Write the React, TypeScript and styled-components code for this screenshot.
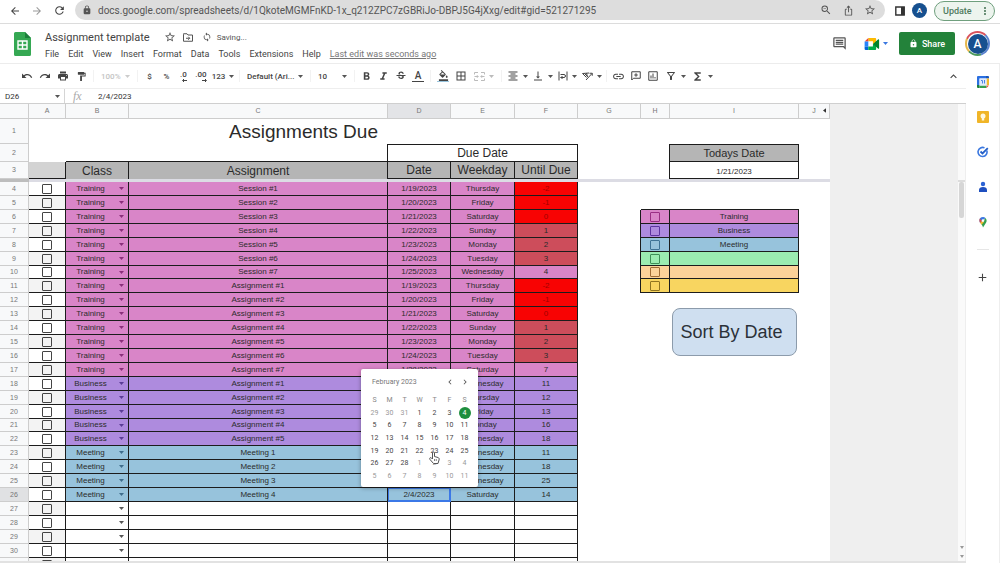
import React from "react";
import styled, { createGlobalStyle, css } from "styled-components";
import {
  MdUndo, MdRedo, MdPrint, MdFormatPaint, MdFormatBold, MdFormatItalic, MdStrikethroughS,
  MdFormatColorFill, MdBorderAll, MdFormatAlignCenter, MdVerticalAlignBottom,
  MdLink, MdFunctions, MdKeyboardArrowUp, MdStarBorder, MdSync,
  MdOutlineInsertComment, MdArrowBack, MdArrowForward, MdRefresh, MdLock, MdZoomOut, MdIosShare,
  MdMoreVert, MdAdd, MdChevronLeft, MdChevronRight, MdOutlineFilterAlt,
} from "react-icons/md";

const ui = `Roboto, "Liberation Sans", sans-serif`;
const arial = `"Liberation Sans", Arial, sans-serif`;

const GlobalStyle = createGlobalStyle`
  *, *::before, *::after { box-sizing: border-box; }
  body { margin: 0; background: #fff; font-family: ${ui}; color: #444; overflow: hidden; }
  button, input, select { font: inherit; color: inherit; margin: 0; padding: 0; border: 0; background: none; }
  button { cursor: pointer; }
  svg { display: block; flex: none; }
`;

const Page = styled.div`
  display: flex;
  flex-direction: column;
  height: 100vh;
`;

/* Browser bar */
const BrowserBar = styled.div`
  display: flex;
  align-items: flex-start;
  height: 24px;
  flex: none;
  border-bottom: 1px solid #dcdcdc;
`;
const NavButtons = styled.div`
  display: flex;
  align-items: center;
  height: 21px;
  padding-left: 4px;
  width: 75px;
`;
const NavButton = styled.button<{ $dim?: boolean }>`
  display: flex;
  justify-content: center;
  width: 22px;
  color: ${(p) => (p.$dim ? "#999" : "#444")};
`;
const Address = styled.div`
  display: flex;
  align-items: center;
  flex: 1;
  min-width: 0;
  height: 20px;
  padding: 0 4px 0 7px;
  background: #dddddd;
  border-radius: 10px;
  color: #555;
`;
const AddressInput = styled.input`
  flex: 1;
  min-width: 0;
  height: 20px;
  padding-left: 6px;
  font: 10px ${ui};
  color: #555;
`;
const AddressButton = styled.button`
  display: flex;
  justify-content: center;
  width: 22px;
  color: #555;
`;
const BrowserActions = styled.div`
  display: flex;
  align-items: center;
  height: 21px;
  padding: 0 5px 0 10px;
  gap: 7px;
`;
const Avatar = styled.button<{ $size: number }>`
  width: ${(p) => p.$size}px;
  height: ${(p) => p.$size}px;
  border-radius: 50%;
  background: #17508f;
  color: #fff;
  font: 500 ${(p) => (p.$size > 16 ? 12 : 8)}px/1 ${ui};
`;
const UpdateButton = styled.button`
  display: flex;
  align-items: center;
  justify-content: space-between;
  width: 61px;
  height: 20px;
  padding: 0 3px 0 8px;
  border: 1px solid #6f9f7d;
  border-radius: 10px;
  background: #edf4ee;
  color: #4f7a5d;
  font-size: 9px;
  font-weight: 500;
`;

/* Document header */
const DocHeader = styled.header`
  display: flex;
  align-items: center;
  height: 40px;
  flex: none;
  padding: 0 10px 0 14px;
  border-bottom: 1px solid #ececec;
`;
const DocInfo = styled.div`
  display: flex;
  flex-direction: column;
  flex: 1;
  gap: 2px;
  padding: 3px 0 0 14px;
`;
const TitleRow = styled.div`
  display: flex;
  align-items: center;
  height: 15px;
`;
const Title = styled.h1`
  margin: 0 14px 0 0;
  font: 400 11px/15px ${ui};
  color: #444;
`;
const TitleIcon = styled.button`
  display: flex;
  width: 19px;
  color: #555;
`;
const Saving = styled.span`
  font-size: 8px;
  color: #555;
  margin-left: -4px;
`;
const MenuRow = styled.nav`
  display: flex;
  align-items: center;
  gap: 9px;
  height: 14px;
  font-size: 9px;
`;
const MenuButton = styled.button`
  color: #444;
  white-space: nowrap;
`;
const LastEdit = styled.a`
  color: #777;
  text-decoration: underline;
`;
const HeaderActions = styled.div`
  display: flex;
  align-items: center;
  gap: 10px;
`;
const IconButton = styled.button`
  display: flex;
  align-items: center;
  justify-content: center;
  color: #555;
`;
const MeetButton = styled(IconButton)`
  width: 32px;
  gap: 3px;
  padding-left: 5px;
`;
const ShareButton = styled.button`
  display: flex;
  align-items: center;
  justify-content: center;
  gap: 4px;
  width: 56px;
  height: 23px;
  border-radius: 2px;
  background: #23823a;
  color: #fff;
  font-size: 9px;
  font-weight: 500;
`;
const AvatarRing = styled.div`
  display: flex;
  align-items: center;
  justify-content: center;
  width: 25px;
  height: 25px;
  border-radius: 50%;
  background:
    radial-gradient(circle, #fff 0 10px, transparent 11px),
    conic-gradient(#d9535c 0 12%, #5b83cf 12% 45%, #4c9a5e 45% 63%, #e6b74b 63% 82%, #d9535c 82%);
`;

/* Body: editor beside the app panel */
const Workspace = styled.div`
  display: flex;
  flex: 1;
  min-height: 0;
`;
const Editor = styled.main`
  display: flex;
  flex-direction: column;
  flex: 1;
  min-width: 0;
`;
const Toolbar = styled.div`
  display: flex;
  align-items: center;
  height: 25px;
  flex: none;
  padding: 0 4px 0 18px;
  border-bottom: 1px solid #eee;
  color: #444;
  font-size: 8px;
`;
const Tool = styled.button<{ $w?: number; $dim?: boolean }>`
  display: flex;
  align-items: center;
  justify-content: center;
  gap: 4px;
  width: ${(p) => p.$w ?? 18}px;
  height: 20px;
  flex: none;
  color: ${(p) => (p.$dim ? "#bbb" : "#444")};
  font-weight: 500;
`;
const Decimal = styled.span`
  display: flex;
  flex-direction: column;
  line-height: 8px;
  svg { align-self: flex-end; }
`;
const Divider = styled.span`
  width: 1px;
  height: 12px;
  margin: 0 3px;
  flex: none;
  background: #f2f2f2;
`;
const Swatched = styled.span<{ $bar: string }>`
  display: flex;
  justify-content: center;
  width: 12px;
  border-bottom: 1px solid ${(p) => p.$bar};
  font-size: 10px;
  line-height: 11px;
`;
const Picker = styled.label<{ $w: number; $dim?: boolean }>`
  display: flex;
  align-items: center;
  width: ${(p) => p.$w}px;
  padding: 0 4px;
  flex: none;
  color: ${(p) => (p.$dim ? "#c4c4c4" : "#444")};
  font-weight: 500;
  select { flex: 1; min-width: 0; appearance: none; outline: 0; opacity: 1; color: inherit; }
  svg { pointer-events: none; }
`;
const Spacer = styled.span`
  flex: 1;
`;

const FormulaBar = styled.div`
  display: flex;
  align-items: center;
  height: 15px;
  flex: none;
  border-bottom: 1px solid #cfcfcf;
  font-size: 8px;
  color: #333;
`;
const NameBox = styled.label`
  display: flex;
  align-items: center;
  width: 65px;
  height: 14px;
  padding: 0 4px 0 5px;
  border-right: 1px solid #d5d5d5;
  input { flex: 1; min-width: 0; font: 8px ${ui}; }
`;
const Fx = styled.span`
  width: 33px;
  padding-left: 8px;
  font: italic 12px/14px "Liberation Serif", serif;
  color: #aaa;
`;
const FormulaInput = styled.input`
  flex: 1;
  font: 8px ${ui};
`;

/* Sheet */
const SheetArea = styled.div`
  display: flex;
  flex: 1;
  min-height: 0;
  border-bottom: 2px solid #e2e2e2;
`;
const SheetView = styled.div`
  position: relative;
  flex: 1;
  min-width: 0;
  overflow: hidden;
  background: #efefef;
`;
const Grid = styled.table`
  table-layout: fixed;
  width: 830px;
  border-spacing: 0;
  background: #fff;
  font-family: ${arial};
  font-size: 8px;
  line-height: 12px;
  color: #2b2b2b;
`;
const Row = styled.tr<{ $h: number }>`
  height: ${(p) => p.$h}px;
`;
/* Every eleventh row is rounded down, as the zoomed-out grid does. */
const Body = styled.tbody`
  tr { height: 14px; }
  tr:nth-child(11n - 4) { height: 13px; }
`;
const head = css`
  padding: 0;
  background: #f8f9fa;
  border: 0 solid #cdcdcd;
  border-width: 0 1px 1px 0;
  color: #777;
  font-weight: 400;
  font-size: 7px;
  text-align: center;
`;
const ColHead = styled.th<{ $active?: boolean }>`
  ${head}
  position: relative;
  ${(p) => p.$active && "background: #e3e4e7;"}
  svg { position: absolute; right: 3px; top: 4px; }
`;
const RowHead = styled.th<{ $active?: boolean }>`
  ${head}
  ${(p) => p.$active && "background: #e0e1e3;"}
`;
type CellProps = {
  $bg?: string; $t?: boolean; $r?: boolean; $b?: boolean; $ink?: string; $size?: number; $selected?: boolean; $low?: boolean;
};
const Cell = styled.td<CellProps>`
  padding: 0;
  text-align: center;
  vertical-align: ${(p) => (p.$low ? "bottom" : "middle")};
  white-space: nowrap;
  background: ${(p) => p.$bg ?? "transparent"};
  color: ${(p) => p.$ink ?? "inherit"};
  border: 0 solid #1c1c1c;
  border-top-width: ${(p) => (p.$t ? 1 : 0)}px;
  border-right-width: ${(p) => (p.$r ? 1 : 0)}px;
  border-bottom-width: ${(p) => (p.$b ? 1 : 0)}px;
  ${(p) => p.$size && `font-size: ${p.$size}px; line-height: ${p.$size}px;`}
  ${(p) => p.$selected && "box-shadow: inset 0 0 0 1px #3b78e7; border-color: #3b78e7;"}
`;
const Freeze = styled.td<{ $dark?: boolean }>`
  padding: 0;
  background: ${(p) => (p.$dark ? "#bdbdbd" : "#dcdce4")};
`;
const Tick = styled.input<{ $ink?: string }>`
  display: block;
  appearance: none;
  width: 10px;
  height: 10px;
  margin: 0 auto;
  border: 1px solid ${(p) => p.$ink ?? "#444"};
  border-radius: 1px;
`;
const ClassPick = styled.div`
  display: flex;
  align-items: center;
  height: 12px;
  select {
    width: 49px;
    height: 12px;
    appearance: none;
    text-align: center;
    text-align-last: center;
    line-height: 12px;
  }
  svg { margin-left: 4px; pointer-events: none; }
`;
const SortButton = styled.button`
  position: absolute;
  left: 672px;
  top: 204px;
  width: 125px;
  height: 48px;
  padding-right: 6px;
  border: 1px solid #8c9bab;
  border-radius: 8px;
  background: #cfdff0;
  color: #2b3138;
  font: 18px ${arial};
`;

/* Date picker */
const Popup = styled.div`
  position: absolute;
  left: 361px;
  top: 265px;
  width: 117px;
  padding: 5px 6px;
  border-radius: 2px;
  background: #fff;
  box-shadow: 0 1px 4px rgba(0, 0, 0, 0.35);
  color: #555;
  font-size: 7px;
`;
const Month = styled.div`
  display: flex;
  align-items: center;
  height: 15px;
  padding: 0 0 0 5px;
  span { flex: 1; font-size: 7px; color: #777; }
  button { width: 15px; display: flex; justify-content: center; }
`;
const Days = styled.div`
  display: grid;
  grid-template-columns: repeat(7, 1fr);
  grid-template-rows: repeat(7, 1fr);
  height: 88px;
  margin-top: 5px;
  place-items: center;
`;
const DayName = styled.span`
  color: #888;
`;
const Day = styled.button<{ $muted?: boolean; $on?: boolean }>`
  width: 12px;
  height: 12px;
  border-radius: 50%;
  line-height: 12px;
  color: ${(p) => (p.$on ? "#fff" : p.$muted ? "#999" : "#444")};
  background: ${(p) => (p.$on ? "#1e8e3e" : "transparent")};
`;
const Pointer = styled.svg`
  position: absolute;
  left: 68px;
  top: 82px;
`;

/* Scroll track */
const Track = styled.div`
  display: flex;
  flex-direction: column;
  align-items: center;
  width: 8px;
  flex: none;
  background: #fafafa;
  border-right: 1px solid #eee;
`;
const TrackHead = styled.div`
  width: 100%;
  height: 78px;
  border-bottom: 2px solid #dcdcdc;
`;
const Thumb = styled.div`
  width: 5px;
  height: 36px;
  border-radius: 2px;
  background: #d6d6d6;
`;
const Arrows = styled.div`
  display: flex;
  flex-direction: column;
  gap: 6px;
  margin-top: auto;
  padding-bottom: 3px;
`;

/* App panel */
const AppPanel = styled.aside`
  display: flex;
  flex-direction: column;
  align-items: center;
  width: 34px;
  flex: none;
  border-right: 1px solid #eee;
`;
const AppButton = styled.button`
  display: flex;
  align-items: center;
  justify-content: center;
  width: 33px;
  height: 35px;
  color: #444;
`;
const AppRule = styled.hr`
  width: 12px;
  margin: 10px 0;
  border: 0;
  border-top: 1px solid #e6e6e6;
`;

const Caret = ({ color = "#555", size = 5 }: { color?: string; size?: number }) => (
  <svg width={size} height="3" viewBox="0 0 6 3" preserveAspectRatio="none"><path d="M0 0h6L3 3z" fill={color} /></svg>
);

const PINK = "#d985c8", PURPLE = "#ae8bde", BLUE = "#97c3dc";
const GREEN = "#9becb1", ORANGE = "#fcd299", YELLOW = "#f8d560";
const GRAY = "#b5b5b5", RED = "#f80303", ROSE = "#cd4d5b";
const classes: Record<string, string> = { Training: PINK, Business: PURPLE, Meeting: BLUE };
const caretInk: Record<string, string> = { Training: "#8a2f7a", Business: "#5b3c96", Meeting: "#3f6d8c" };

type Entry = [string, string, string, string, string];
const entries: Entry[] = [
  ["Training", "Session #1", "1/19/2023", "Thursday", "-2"],
  ["Training", "Session #2", "1/20/2023", "Friday", "-1"],
  ["Training", "Session #3", "1/21/2023", "Saturday", "0"],
  ["Training", "Session #4", "1/22/2023", "Sunday", "1"],
  ["Training", "Session #5", "1/23/2023", "Monday", "2"],
  ["Training", "Session #6", "1/24/2023", "Tuesday", "3"],
  ["Training", "Session #7", "1/25/2023", "Wednesday", "4"],
  ["Training", "Assignment #1", "1/19/2023", "Thursday", "-2"],
  ["Training", "Assignment #2", "1/20/2023", "Friday", "-1"],
  ["Training", "Assignment #3", "1/21/2023", "Saturday", "0"],
  ["Training", "Assignment #4", "1/22/2023", "Sunday", "1"],
  ["Training", "Assignment #5", "1/23/2023", "Monday", "2"],
  ["Training", "Assignment #6", "1/24/2023", "Tuesday", "3"],
  ["Training", "Assignment #7", "1/28/2023", "Saturday", "7"],
  ["Business", "Assignment #1", "2/1/2023", "Wednesday", "11"],
  ["Business", "Assignment #2", "2/2/2023", "Thursday", "12"],
  ["Business", "Assignment #3", "2/3/2023", "Friday", "13"],
  ["Business", "Assignment #4", "2/6/2023", "Monday", "16"],
  ["Business", "Assignment #5", "2/8/2023", "Wednesday", "18"],
  ["Meeting", "Meeting 1", "2/1/2023", "Wednesday", "11"],
  ["Meeting", "Meeting 2", "2/8/2023", "Wednesday", "18"],
  ["Meeting", "Meeting 3", "2/15/2023", "Wednesday", "25"],
  ["Meeting", "Meeting 4", "2/4/2023", "Saturday", "14"],
  ...Array.from({ length: 5 }, (): Entry => ["", "", "", "", ""]),
];

const legend: Record<number, [string, string, string]> = {
  6: [PINK, "Training", "#9a2f85"],
  7: [PURPLE, "Business", "#5d35a0"],
  8: [BLUE, "Meeting", "#3f7396"],
  9: [GREEN, "", "#3f8f58"],
  10: [ORANGE, "", "#a06c35"],
  11: [YELLOW, "", "#8f7420"],
};

const widths = [29, 37, 63, 259, 63, 64, 63, 63, 29, 129, 31];

const EntryRow = ({ entry, n }: { entry: Entry; n: number }) => {
  const [kind, name, date, day, left] = entry;
  const bg = classes[kind];
  const due = left === "" ? NaN : Number(left);
  const dueBg = due <= 0 ? RED : due <= 3 ? ROSE : bg;
  const key = legend[n];
  return (
    <tr>
      <RowHead scope="row" $active={n === 26}>{n}</RowHead>
      <Cell $r $b $bg={n % 2 ? "#f3f3f3" : "#fff"}><Tick type="checkbox" aria-label={`Row ${n} done`} /></Cell>
      <Cell $r $b $bg={bg}>
        <ClassPick>
          <select aria-label={`Row ${n} class`} defaultValue={kind}>
            <option></option><option>Training</option><option>Business</option><option>Meeting</option>
          </select>
          <Caret color={caretInk[kind]} />
        </ClassPick>
      </Cell>
      <Cell $r $b $bg={bg}>{name}</Cell>
      <Cell $r $b $bg={bg} $selected={n === 26}>{date}</Cell>
      <Cell $r $b $bg={bg}>{day}</Cell>
      <Cell $r $b $bg={dueBg} $ink={due <= 0 ? "#a00000" : undefined}>{left}</Cell>
      <Cell $r={!!key} />
      <Cell $r={!!key} $b={!!key || n === 5} $bg={key?.[0]}>
        {key && <Tick type="checkbox" aria-label={`Legend ${n - 5}`} $ink={key[2]} />}
      </Cell>
      <Cell $r={!!key} $b={!!key || n === 5} $bg={key?.[0]}>{key?.[1]}</Cell>
      <Cell />
    </tr>
  );
};

const monthDays = [29, 30, 31, ...Array.from({ length: 28 }, (_, i) => i + 1), ...Array.from({ length: 11 }, (_, i) => i + 1)];

const DatePicker = () => (
  <Popup role="dialog" aria-label="Choose date">
    <Month>
      <span>February 2023</span>
      <button aria-label="Previous month"><MdChevronLeft size={10} /></button>
      <button aria-label="Next month"><MdChevronRight size={10} /></button>
    </Month>
    <Days>
      {["S", "M", "T", "W", "T", "F", "S"].map((d, i) => <DayName key={i}>{d}</DayName>)}
      {monthDays.map((d, i) => <Day key={i} $muted={i < 3 || i > 30} $on={i === 6}>{d}</Day>)}
    </Days>
    <Pointer width="11" height="14" viewBox="0 0 22 28">
      <path d="M7 16V4c0-3 4-3 4 0v7l7 2c2 1 3 2 2 5l-2 7H9l-7-8c-2-3 1-5 3-3z" fill="#fff" stroke="#555" strokeWidth="2" strokeLinejoin="round" />
      <path d="M11 16v4M14.500 16v4" stroke="#555" strokeWidth="1.500" />
    </Pointer>
  </Popup>
);

const SheetsLogo = () => (
  <svg width="17" height="24" viewBox="0 0 17 24">
    <path d="M1.500 0H11l6 6v16.500a1.500 1.500 0 0 1-1.500 1.500h-14A1.500 1.500 0 0 1 0 22.500v-21A1.500 1.500 0 0 1 1.500 0z" fill="#35a853" />
    <path d="M11 0l6 6h-6z" fill="#1d7f3c" />
    <path d="M4 9h9v8H4zM4 13h9M8.500 9v8" fill="none" stroke="#fff" strokeWidth="1.400" />
  </svg>
);
const MeetLogo = () => (
  <svg width="16" height="12" viewBox="0 0 16 13">
    <path d="M4 0h7v3.500H4z" fill="#fbbc04" />
    <path d="M4 0v3.800H0z" fill="#ea4335" />
    <path d="M0 3.800h4v5.400H0z" fill="#2684fc" />
    <path d="M0 9.200h4V13H1.200A1.200 1.200 0 0 1 0 11.800z" fill="#0066da" />
    <path d="M4 9.200h5V7l3.500-3V12a1 1 0 0 1-1 1H4z" fill="#00ac47" />
    <path d="M9 3.500V0h2.500a1 1 0 0 1 1 1v3L9 6.800z" fill="#ffba00" />
    <path d="M9 6.500l5.500-5c.5-.4 1.200 0 1.200.5v9c0 .6-.7 1-1.200.5z" fill="#00832d" />
  </svg>
);
const FolderMove = () => (
  <svg width="10" height="9" viewBox="0 0 20 18" fill="none" stroke="#555" strokeWidth="2">
    <path d="M1 3.500V16.500h18V4H10L8 1.500H1z" /><path d="M6 10.500h7M10.500 7.500l3 3-3 3" />
  </svg>
);
const SidePanelIcon = () => (
  <svg width="10" height="10" viewBox="0 0 10 10"><path d="M.8 1h8.400v8H.8z" fill="none" stroke="#333" strokeWidth="1.400" /><path d="M6 1h3.500v8H6z" fill="#333" /></svg>
);
const MergeIcon = () => (
  <svg width="11" height="9" viewBox="0 0 22 18" fill="none" stroke="#bbb" strokeWidth="2">
    <path d="M1 5V1h7M14 1h7v4M1 13v4h7M14 17h7v-4M1 9h7M14 9h7M6 6.500L8.500 9 6 11.500M16 6.500L13.500 9 16 11.500" />
  </svg>
);
const WrapIcon = () => (
  <svg width="10" height="10" viewBox="0 0 20 20" fill="none" stroke="#444" strokeWidth="2">
    <path d="M2 1v18M18 1v18M5 13h7c4 0 4-6 0-6H5M9 10l-3 3 3 3" />
  </svg>
);
const RotateIcon = () => (
  <svg width="11" height="10" viewBox="0 0 22 20" fill="none" stroke="#444" strokeWidth="2">
    <path d="M1 5l13-1M1 5l8 8M5 5l6 6M9 4l2 8M8 18L20 5M15 4.500l5.500 0v5" />
  </svg>
);
const AddCommentIcon = () => (
  <svg width="10" height="10" viewBox="0 0 20 20" fill="none" stroke="#444" strokeWidth="2">
    <path d="M1.500 18V1.500h17v13H5zM10 4.500v7M6.500 8h7" />
  </svg>
);
const ChartIcon = () => (
  <svg width="10" height="10" viewBox="0 0 20 20" fill="none" stroke="#444" strokeWidth="2">
    <path d="M1.500 1.500h17v17h-17zM6 9v6M10 5v10M14 12v3" />
  </svg>
);
const CalendarLogo = () => (
  <svg width="12" height="12" viewBox="0 0 12 12">
    <path d="M0 1a1 1 0 0 1 1-1h8v2.500H2.500V9H0z" fill="#2b6fe0" />
    <path d="M9 0h2a1 1 0 0 1 1 1v1.500H9z" fill="#1a56b8" /><path d="M9.500 2.500H12V9H9.500z" fill="#f2b92e" />
    <path d="M2.500 9.500h7V12h-7z" fill="#35a04f" /><path d="M0 9h2.500v3H1a1 1 0 0 1-1-1z" fill="#1d7f3c" />
    <path d="M9.500 9.500H12L9.500 12z" fill="#e34c3c" /><path d="M2.500 2.500h7v7h-7z" fill="#dfe9fb" />
    <path d="M4 4.500h1.500v3M7.500 4v3.500" stroke="#4b85e5" fill="none" />
  </svg>
);
const KeepLogo = () => (
  <svg width="12" height="12" viewBox="0 0 12 12">
    <rect width="12" height="12" rx="1" fill="#f0b528" />
    <circle cx="6" cy="5" r="2.500" fill="#fff8e0" /><path d="M4.800 7h2.400v2.500H4.800z" fill="#fff8e0" />
  </svg>
);
const TasksLogo = () => (
  <svg width="12" height="12" viewBox="0 0 12 12" fill="none">
    <path d="M9.800 4.500A4.500 4.500 0 1 1 7.500 1.900" stroke="#3b78e0" strokeWidth="1.600" />
    <path d="M3.500 5.500l2 2 5.300-5.300" stroke="#2460c8" strokeWidth="1.800" />
  </svg>
);
const ContactsLogo = () => (
  <svg width="10" height="12" viewBox="0 0 10 12">
    <circle cx="5" cy="3" r="2.200" fill="#2b62d4" /><path d="M1 11V9c0-2 1.500-3 4-3s4 1 4 3v2z" fill="#1f4fbf" />
  </svg>
);
const MapsLogo = () => (
  <svg width="10" height="12" viewBox="0 0 10 12">
    <path d="M5 1a3.600 3.600 0 0 0-3.600 3.600c0 1 .3 1.700.8 2.400L7.500 2C6.800 1.300 6 1 5 1z" fill="#3b78e0" />
    <path d="M1.900 2.600C1.200 3.900 1.300 5.800 2.200 7L4 5z" fill="#e34c3c" />
    <path d="M7.400 1.900c1.600 1.400 1.500 3.500.6 4.900L5 11.500C4.700 10 4.200 9.300 3.400 8.300z" fill="#35a04f" />
    <path d="M2.200 7l2-2.200L6 6 3.500 8.700z" fill="#f2b92e" />
    <circle cx="5" cy="4.600" r="1.300" fill="#fff" />
  </svg>
);

export default function App() {
  return (
    <Page>
      <GlobalStyle />
      <BrowserBar>
        <NavButtons>
          <NavButton aria-label="Back"><MdArrowBack size={12} /></NavButton>
          <NavButton aria-label="Forward" $dim><MdArrowForward size={12} /></NavButton>
          <NavButton aria-label="Reload"><MdRefresh size={13} /></NavButton>
        </NavButtons>
        <Address>
          <MdLock size={10} />
          <AddressInput aria-label="Address" defaultValue="docs.google.com/spreadsheets/d/1QkoteMGMFnKD-1x_q212ZPC7zGBRiJo-DBPJ5G4jXxg/edit#gid=521271295" />
          <AddressButton aria-label="Zoom"><MdZoomOut size={12} /></AddressButton>
          <AddressButton aria-label="Share page"><MdIosShare size={11} /></AddressButton>
          <AddressButton aria-label="Bookmark"><MdStarBorder size={12} /></AddressButton>
        </Address>
        <BrowserActions>
          <IconButton aria-label="Side panel"><SidePanelIcon /></IconButton>
          <Avatar $size={15}>A</Avatar>
          <UpdateButton>Update<MdMoreVert size={12} /></UpdateButton>
        </BrowserActions>
      </BrowserBar>

      <DocHeader>
        <SheetsLogo />
        <DocInfo>
          <TitleRow>
            <Title>Assignment template</Title>
            <TitleIcon aria-label="Star"><MdStarBorder size={12} /></TitleIcon>
            <TitleIcon aria-label="Move"><FolderMove /></TitleIcon>
            <TitleIcon aria-label="Sync status"><MdSync size={10} /></TitleIcon>
            <Saving>Saving...</Saving>
          </TitleRow>
          <MenuRow>
            {["File", "Edit", "View", "Insert", "Format", "Data", "Tools", "Extensions", "Help"].map((m) => (
              <MenuButton key={m}>{m}</MenuButton>
            ))}
            <LastEdit href="#history">Last edit was seconds ago</LastEdit>
          </MenuRow>
        </DocInfo>
        <HeaderActions>
          <IconButton aria-label="Comments"><MdOutlineInsertComment size={15} /></IconButton>
          <MeetButton aria-label="Meet"><MeetLogo /><Caret color="#3b78e0" size={5} /></MeetButton>
          <ShareButton><MdLock size={9} />Share</ShareButton>
          <AvatarRing><Avatar $size={20}>A</Avatar></AvatarRing>
        </HeaderActions>
      </DocHeader>

      <Workspace>
        <Editor>
          <Toolbar>
            <Tool aria-label="Undo"><MdUndo size={12} /></Tool>
            <Tool aria-label="Redo"><MdRedo size={12} /></Tool>
            <Tool aria-label="Print"><MdPrint size={12} /></Tool>
            <Tool aria-label="Paint format"><MdFormatPaint size={11} /></Tool>
            <Divider />
            <Picker $w={37} $dim><select aria-label="Zoom" disabled><option>100%</option></select><Caret color="#ccc" /></Picker>
            <Divider />
            <Tool $w={17}>$</Tool>
            <Tool $w={17}>%</Tool>
            <Tool $w={17} aria-label="Decrease decimals"><Decimal>.0<svg width="5" height="3" viewBox="0 0 5 3"><path d="M5 1.500H1M2 0L.5 1.500 2 3" stroke="#444" fill="none" /></svg></Decimal></Tool>
            <Tool $w={18} aria-label="Increase decimals"><Decimal>.00<svg width="5" height="3" viewBox="0 0 5 3"><path d="M0 1.500h4M3 0l1.500 1.500L3 3" stroke="#444" fill="none" /></svg></Decimal></Tool>
            <Tool $w={26}>123<Caret /></Tool>
            <Divider />
            <Picker $w={64}><select aria-label="Font"><option>Default (Ari...</option></select><Caret /></Picker>
            <Divider />
            <Picker $w={37}><select aria-label="Font size"><option>10</option></select><Caret /></Picker>
            <Divider />
            <Tool $w={17} aria-label="Bold"><MdFormatBold size={13} /></Tool>
            <Tool $w={17} aria-label="Italic"><MdFormatItalic size={13} /></Tool>
            <Tool $w={17} aria-label="Strikethrough"><MdStrikethroughS size={12} /></Tool>
            <Tool aria-label="Text color"><Swatched $bar="#444">A</Swatched></Tool>
            <Divider />
            <Tool aria-label="Fill color"><Swatched $bar="#97c3dc"><MdFormatColorFill size={11} /></Swatched></Tool>
            <Tool aria-label="Borders"><MdBorderAll size={12} /></Tool>
            <Tool $w={28} $dim aria-label="Merge cells"><MergeIcon /><Caret color="#bbb" /></Tool>
            <Divider />
            <Tool $w={25} aria-label="Horizontal align"><MdFormatAlignCenter size={12} /><Caret /></Tool>
            <Tool $w={25} aria-label="Vertical align"><MdVerticalAlignBottom size={12} /><Caret /></Tool>
            <Tool $w={25} aria-label="Text wrapping"><WrapIcon /><Caret /></Tool>
            <Tool $w={23} aria-label="Text rotation"><RotateIcon /><Caret /></Tool>
            <Divider />
            <Tool $w={17} aria-label="Insert link"><MdLink size={13} /></Tool>
            <Tool $w={17} aria-label="Insert comment"><AddCommentIcon /></Tool>
            <Tool $w={17} aria-label="Insert chart"><ChartIcon /></Tool>
            <Tool $w={28} aria-label="Filter"><MdOutlineFilterAlt size={12} /><Caret /></Tool>
            <Tool $w={25} aria-label="Functions"><MdFunctions size={13} /><Caret /></Tool>
            <Spacer />
            <Tool aria-label="Hide menus"><MdKeyboardArrowUp size={13} /></Tool>
          </Toolbar>
          <FormulaBar>
            <NameBox><input aria-label="Name box" defaultValue="D26" /><Caret /></NameBox>
            <Fx>fx</Fx>
            <FormulaInput aria-label="Formula" defaultValue="2/4/2023" />
          </FormulaBar>

          <SheetArea>
            <SheetView>
              <Grid>
                <colgroup>{widths.map((w, i) => <col key={i} width={w} />)}</colgroup>
                <thead>
                  <Row $h={15}>
                    <ColHead />
                    {"ABCDEFGHIJ".split("").map((c) => (
                      <ColHead key={c} scope="col" $active={c === "D"}>
                        {c}
                        {c === "J" && <svg width="3" height="5" viewBox="0 0 4 6"><path d="M4 0v6L0 3z" fill="#333" /></svg>}
                      </ColHead>
                    ))}
                  </Row>
                  <Row $h={25}>
                    <RowHead scope="row">1</RowHead>
                    <Cell colSpan={6} $size={19}>Assignments Due</Cell>
                    <Cell colSpan={4} />
                  </Row>
                  <Row $h={18}>
                    <RowHead scope="row">2</RowHead>
                    <Cell />
                    <Cell $b />
                    <Cell $b $r />
                    <Cell colSpan={3} $t $r $b $size={12}>Due Date</Cell>
                    <Cell />
                    <Cell $r />
                    <Cell $t $r $b $bg={GRAY} $size={11}>Todays Date</Cell>
                    <Cell />
                  </Row>
                  <Row $h={17}>
                    <RowHead scope="row">3</RowHead>
                    <Cell $r $b $bg="#d3d3d3" />
                    <Cell $r $bg={GRAY} $size={12}>Class</Cell>
                    <Cell $r $bg={GRAY} $size={12}>Assignment</Cell>
                    <Cell $r $b $bg={GRAY} $size={12}>Date</Cell>
                    <Cell $r $b $bg={GRAY} $size={12}>Weekday</Cell>
                    <Cell $r $b $bg={GRAY} $size={12}>Until Due</Cell>
                    <Cell />
                    <Cell $r />
                    <Cell $r $b $low>1/21/2023</Cell>
                    <Cell />
                  </Row>
                  <Row $h={3}>
                    <Freeze $dark />
                    <Freeze colSpan={10} />
                  </Row>
                </thead>
                <Body>
                  {entries.map((entry, i) => <EntryRow key={i} entry={entry} n={i + 4} />)}
                </Body>
              </Grid>
              <DatePicker />
              <SortButton>Sort By Date</SortButton>
            </SheetView>
            <Track>
              <TrackHead />
              <Thumb />
              <Arrows><Caret color="#999" size={4} /><Caret color="#999" size={4} /></Arrows>
            </Track>
          </SheetArea>
        </Editor>
        <AppPanel>
          <AppButton aria-label="Calendar"><CalendarLogo /></AppButton>
          <AppButton aria-label="Keep"><KeepLogo /></AppButton>
          <AppButton aria-label="Tasks"><TasksLogo /></AppButton>
          <AppButton aria-label="Contacts"><ContactsLogo /></AppButton>
          <AppButton aria-label="Maps"><MapsLogo /></AppButton>
          <AppRule />
          <AppButton aria-label="Get add-ons"><MdAdd size={13} /></AppButton>
        </AppPanel>
      </Workspace>
    </Page>
  );
}
